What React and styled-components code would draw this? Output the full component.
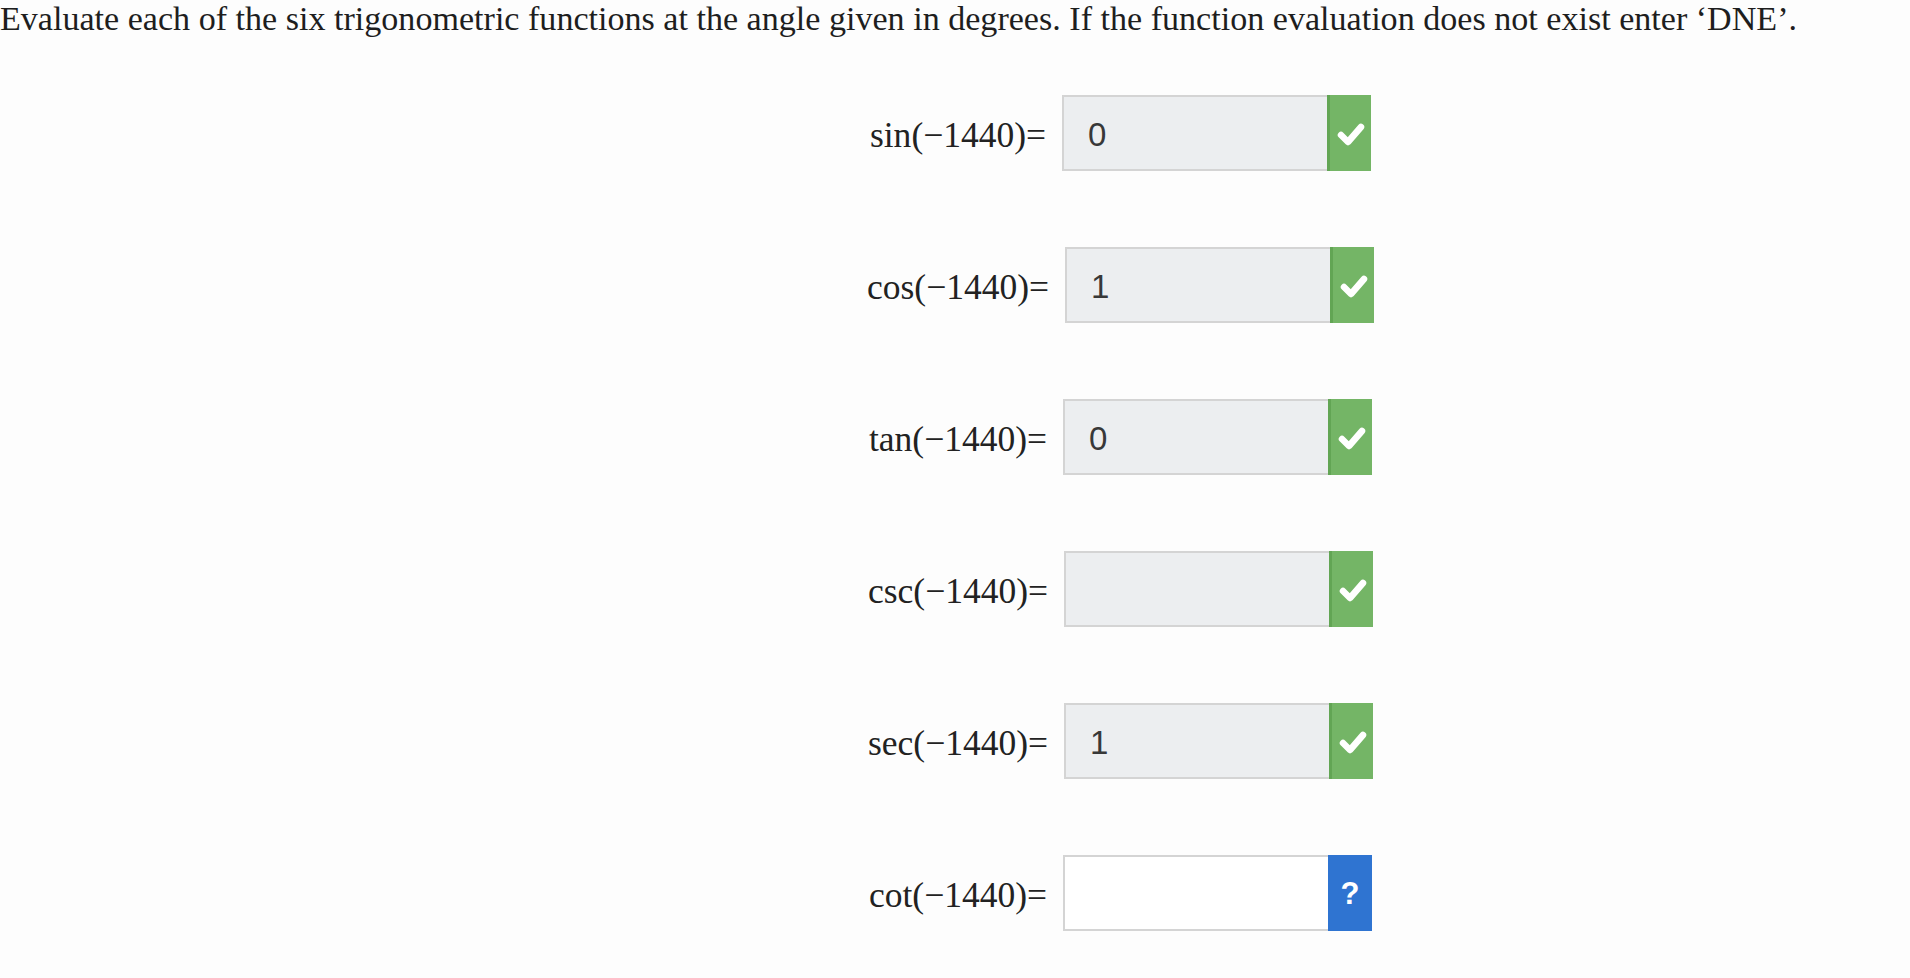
import React from 'react';
import styled, { createGlobalStyle } from 'styled-components';

const GlobalStyle = createGlobalStyle`
  html, body {
    margin: 0;
    padding: 0;
    background: #fdfdfd;
  }
`;

const Page = styled.div`
  width: 1910px;
  height: 978px;
  overflow: hidden;
  color: #1e1e1e;
`;

const Prompt = styled.p`
  margin: 0;
  padding: 1px 0 0 0;
  font-family: 'Liberation Serif', serif;
  font-size: 34.1px;
  line-height: 36px;
  white-space: nowrap;
`;

const Problems = styled.div`
  display: flex;
  flex-direction: column;
  align-items: center;
  gap: 76px;
  margin: 58px 0 0 331px;
`;

const Row = styled.div`
  display: flex;
  align-items: center;
  height: 76px;
`;

const Label = styled.span`
  font-family: 'Liberation Serif', serif;
  font-size: 35.5px;
  color: #222;
  margin-right: 16px;
  padding-top: 4px;
  white-space: nowrap;
`;

const AnswerBox = styled.div`
  display: flex;
  height: 76px;
`;

const Input = styled.div`
  box-sizing: border-box;
  width: 265px;
  height: 76px;
  border: 2px solid #d4d4d4;
  border-right: none;
  background: ${p => (p.$answered ? '#eceef0' : '#ffffff')};
  display: flex;
  align-items: center;
  padding: 4px 0 0 24px;
  font-family: 'Liberation Sans', Arial, sans-serif;
  font-size: 33px;
  color: #383838;
`;

const Status = styled.div`
  box-sizing: border-box;
  width: 44px;
  height: 76px;
  display: flex;
  align-items: center;
  justify-content: center;
  background: ${p => (p.$correct ? '#74b566' : '#2f74d1')};
  border-left: ${p => (p.$correct ? '3px solid #62a554' : 'none')};
  color: #fff;
  font-family: 'Liberation Sans', Arial, sans-serif;
  font-weight: bold;
  font-size: 31px;
  padding-top: 2px;
`;

function Check() {
  return (
    <svg width="30" height="26" viewBox="0 0 30 26">
      <polyline
        points="5,14 12,21 25,6"
        fill="none"
        stroke="#fff"
        strokeWidth="6.5"
        strokeLinecap="round"
        strokeLinejoin="round"
      />
    </svg>
  );
}

const problems = [
  { fn: 'sin', value: '0', correct: true },
  { fn: 'cos', value: '1', correct: true },
  { fn: 'tan', value: '0', correct: true },
  { fn: 'csc', value: '', correct: true },
  { fn: 'sec', value: '1', correct: true },
  { fn: 'cot', value: '', correct: false },
];

export default function App() {
  return (
    <Page>
      <GlobalStyle />
      <Prompt>
        Evaluate each of the six trigonometric functions at the angle given in degrees. If the
        function evaluation does not exist enter ‘DNE’.
      </Prompt>
      <Problems>
        {problems.map(p => (
          <Row key={p.fn}>
            <Label>
              {p.fn}(−1440)=
            </Label>
            <AnswerBox>
              <Input $answered={p.correct}>{p.value}</Input>
              <Status $correct={p.correct}>{p.correct ? <Check /> : '?'}</Status>
            </AnswerBox>
          </Row>
        ))}
      </Problems>
    </Page>
  );
}
